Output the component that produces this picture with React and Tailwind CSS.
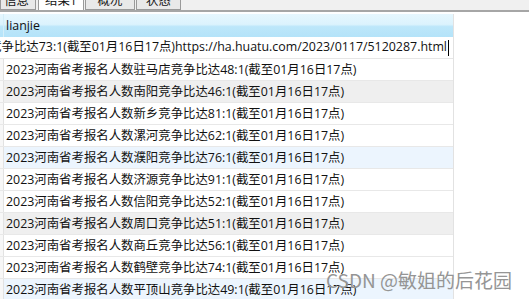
const cities = [
  ['驻马店', '48:1'],
  ['南阳', '46:1'],
  ['新乡', '81:1'],
  ['漯河', '62:1'],
  ['濮阳', '76:1'],
  ['济源', '91:1'],
  ['信阳', '52:1'],
  ['周口', '51:1'],
  ['商丘', '56:1'],
  ['鹤壁', '74:1'],
  ['平顶山', '49:1'],
]

const tabs = [
  { id: 'xinxi', label: '信息', w: 'w-[36px]', justify: 'justify-end pr-[6px]' },
  { id: 'jieguo', label: '结果1', w: 'w-[46px]', active: true },
  { id: 'gaikuang', label: '概况', w: 'w-[50px]' },
  { id: 'zhuangtai', label: '状态', w: 'w-[45px]' },
]

function rowBg(i) {
  // i = index of the data row (0 = 驻马店), the grid colours repeat every 3 rows
  const n = i + 2
  if (n % 3 !== 0) return 'bg-white'
  return (n / 3) % 2 === 1 ? 'bg-[#efefef]' : 'bg-[#ecf5fe]'
}

export default function App() {
  const font = 'font-["Open_Sans","Noto_Sans_CJK_SC",sans-serif]'

  return (
    <div className={`relative w-[529px] h-[299px] overflow-hidden bg-white text-[12.4px] text-[#111] ${font}`}>
      {/* TABS */}
      <div className="h-[12px] bg-[#f0f0f0] border-b-2 border-[#a6a6a6] flex items-end overflow-hidden">
        {tabs.map(t => (
          <div key={t.id}
            className={`${t.w} h-[20px] leading-[19px] shrink-0 flex ${t.justify || 'justify-center'} border border-[#9a9a9a] mr-[1px] ${t.active ? 'bg-white relative z-10 -mb-[2px] h-[22px] ml-[1px]' : 'bg-[#e9e9e9]'}`}>
            {t.label}
          </div>
        ))}
      </div>

      <div className="h-[2px]" />

      {/* GRID */}
      <div className="w-[454px] border-r border-[#e2e2e2]">
        {/* header */}
        <div className="h-[23px] flex bg-[linear-gradient(#e6f7fe_0%,#dcf3fd_45%,#bde7fa_55%,#b4e3f9_100%)]">
          <div className="w-[4px] border-r border-[#d4eef9]" />
          <div className="pl-[2px] leading-[24px]">lianjie</div>
        </div>

        {/* editing row */}
        <div className="h-[22px] flex border-b border-[#e6e6e6] overflow-hidden">
          <div className="flex-1 flex justify-end items-center overflow-hidden whitespace-nowrap pr-[4px]">
            <span>竞争比达73:1(截至01月16日17点)https://ha.huatu.com/2023/0117/5120287.html</span>
            <span className="w-px h-[16px] bg-black ml-[1px] shrink-0" />
          </div>
        </div>

        {cities.map(([c, r], i) => (
          <div key={c} className="h-[22px] flex border-b border-[#e8e8e8]">
            <div className="w-[4px] border-r border-[#e2e2e2] bg-[#f7f7f7]" />
            <div className={`flex-1 pl-[2px] leading-[21px] whitespace-nowrap ${rowBg(i)}`}>
              2023河南省考报名人数{c}竞争比达{r}(截至01月16日17点)
            </div>
          </div>
        ))}
      </div>

      {/* watermark */}
      <div className="absolute left-[326px] top-[267px] text-[19px] leading-[26px] text-[#959595] whitespace-nowrap font-['Noto_Sans_CJK_SC',sans-serif]">
        CSDN @敏姐的后花园
      </div>
    </div>
  )
}
